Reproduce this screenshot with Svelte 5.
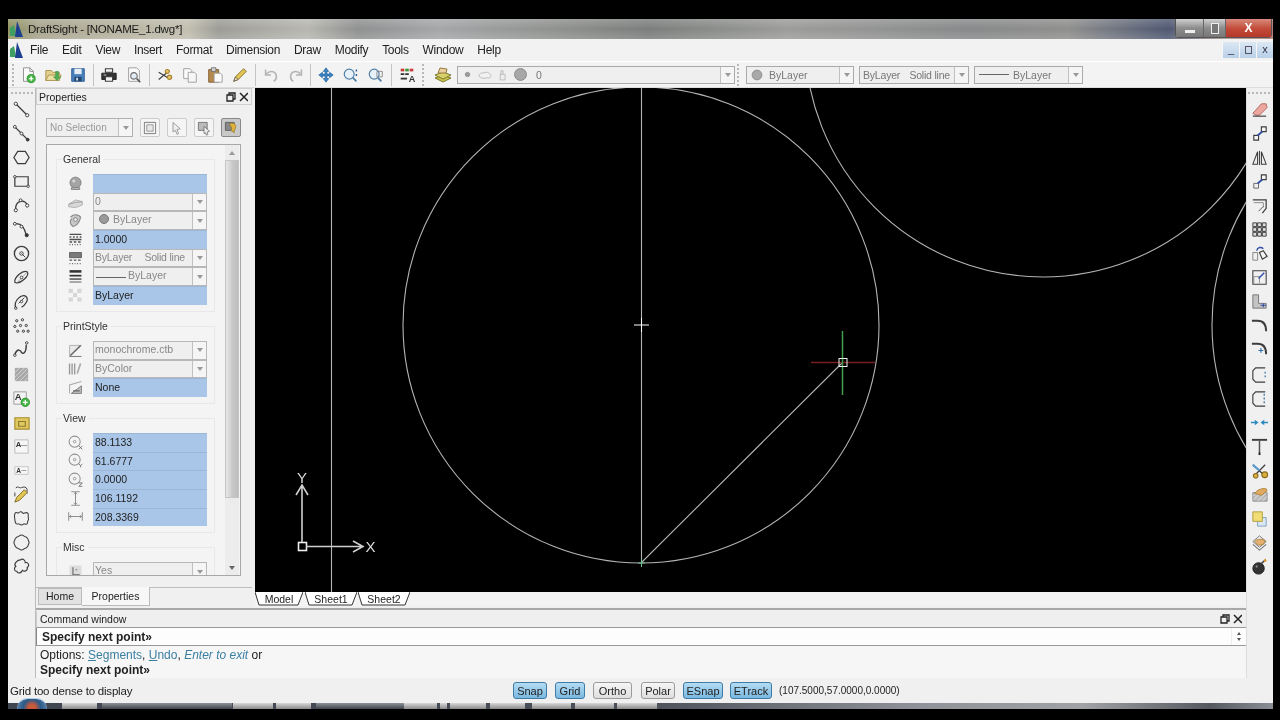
<script>
	const dot = (x, y, r) => `M${x - r} ${y}a${r} ${r} 0 1 0 ${r * 2} 0a${r} ${r} 0 1 0 ${-r * 2} 0`;
	const ink = "#3c3c3c";
	const grey = "#8e8e8e";
	const pale = "#b4b4b4";

	// [path, stroke, fill, width]
	const ic = {
		newdoc: [["M5 2h7l4 4v11H5z", "#8a8a8a", "#fbfbfb"], ["M12 2v4h4", "#8a8a8a", "none"], [dot(13.5, 14, 4.5), "#2f8f2f", "#46b846"], ["M11 14h5M13.5 11.500v5", "#fff", "none", 1.5]],
		open: [["M2 5h6l2 2h7v9H2z", "#a89250", "#e3d08c"], ["M2 16l3-6h14l-2 6z", "#a89250", "#efe0a8"], ["M13 6v6h-2.5l4 4 4-4H16V6z", "#2e8a3a", "#4fae55", 0.6]],
		save: [["M3 3h14v14H3z", "#2c5c94", "#4a80bd"], ["M6 3h8v6H6z", "none", "#e8eef5"], ["M6 12h8v5H6z", "none", "#24486f"], ["M8 13h2v3H8z", "none", "#cfdcea"]],
		print: [["M6 3h8v4H6z", ink, "#f2f2f2", 1.2], ["M2 8h16v7H2z", "#222", "#333"], ["M6 12h8v5H6z", ink, "#f4f4f4", 1.2], ["M4 10h3", "#ddd", "none"]],
		preview: [["M4 2h9l3 3v12H4z", "#9a9a9a", "#fafafa"], [dot(10, 11, 3.6), "#6a6a6a", "#e2ecf6", 1.2], ["M13 14l4 4", "#555", "none", 1.8]],
		cut: [["M3 15L15 5", ink, "none", 1.2], ["M3 7l10 6", ink, "none", 1.2], [dot(15, 12.5, 2.4), "#a8822c", "#e4c468", 1.2], [dot(12.5, 6, 2.2), "#a8822c", "#e4c468", 1.2]],
		copy: [["M3 3h7l2 2v9H3z", "#9c9c9c", "#fafafa"], ["M8 7h7l2 2v9H8z", "#9c9c9c", "#f6f6f6"]],
		paste: [["M3 4h11v14H3z", "#7d5c2e", "#b58a4c"], ["M6 2h5v4H6z", "#6e6e6e", "#d6d6d6"], ["M9 8h7l2 2v8H9z", "#9c9c9c", "#fbfbfb"]],
		pencil: [["M3 17l2-5L14 3l3 3-9 9z", "#7e6a28", "#e2c553"], ["M3 17l2-5 3 3z", "#333", "#eadcb4", 0.6]],
		undo: [["M5 9c4-5 11-3 11 3 0 2-1 4-3 5", pale, "none", 1.8], ["M4 4v6h6", pale, "none", 1.8]],
		redo: [["M15 9c-4-5-11-3-11 3 0 2 1 4 3 5", pale, "none", 1.8], ["M16 4v6h-6", pale, "none", 1.8]],
		pan: [["M10 2l3 4h-2v3h3V7l4 3-4 3v-2h-3v3h2l-3 4-3-4h2v-3H6v2l-4-3 4-3v2h3V6H7z", "#1f5c96", "#3d86c6", 0.7]],
		zoomd: [[dot(8, 9, 5.5), "#4f7fa8", "#e8f1f8", 1.3], ["M12 13l4 4", "#4f7fa8", "none", 2], ["M16 4v2M16 9v2", "#2c5c94", "none", 1.6]],
		zoomw: [[dot(8, 9, 5.5), "#4f7fa8", "#e8f1f8", 1.3], ["M12 13l4 4", "#4f7fa8", "none", 2], ["M11 6h6v6h-6z", "#888", "none", 1]],
		layerman: [["M3 3h4v3H3z", "none", "#c93a3a"], ["M8 3h4v3H8z", "none", "#3a9a3a"], ["M13 3h4v3h-4z", "none", "#c93a3a"], ["M3 8h4v2H3zM8 8h4v2H8z", "none", "#333"], ["M3 13h7v2H3z", "none", "#333"]],
		layer: [["M2 13l8-3 8 3-8 4z", "#7d7a2e", "#c8c24c"], ["M2 10l8-3 8 3-8 4z", "#7d7a2e", "#d9d26a"], ["M5 8l2-5 7 1-1 4z", "#9a7a40", "#e8d0a0"]],
		bulb: [[dot(10, 10, 3.5), "#8c8c8c", "#9a9a9a"]],
		cloud: [["M4 12c-2-3 2-5 4-4 2-2 8-1 8 2 2 2-1 4-3 3-2 1-7 1-9-1z", "#b8b8b8", "#f0f0f0"]],
		lock: [["M6 9h7v8H6z", "#aaa", "#ececec"], ["M7 9V4h3v5", "#aaa", "none"]],
		sphere: [[dot(10, 10, 7), "#808080", "#a8a8a8"]],

		line: [["M4 4l12 12", ink, "none", 1.3], [dot(4, 4, 1.7), ink, "#fff"], [dot(16, 16, 1.7), ink, "#fff"]],
		poly: [["M3 3l7 7 7 7", ink, "none", 1.3], [dot(3, 3, 1.5), ink, "#fff"], [dot(10, 10, 1.5), ink, "#fff"], [dot(16.5, 16.5, 1.5), ink, "#333"]],
		hex: [["M6 3.500h8l4 6.500-4 6.500H6L2 10z", ink, "none", 1.3]],
		rect: [["M3 5h14v10H3z", ink, "none", 1.3], [dot(3, 5, 1.3), ink, "#fff"], [dot(17, 15, 1.3), ink, "#fff"]],
		arc: [["M4 14C3 6 12 2 16 9", ink, "none", 1.3], [dot(4, 15, 1.7), ink, "#fff"], [dot(9, 4.5, 1.5), ink, "#fff"], [dot(16, 10, 1.7), ink, "#fff"]],
		curve: [["M3 4c6-1 10 3 12 12", ink, "none", 1.3], [dot(3, 4, 1.5), ink, "#fff"], [dot(10, 7, 1.5), ink, "#fff"], [dot(15.5, 16, 1.7), ink, "#333"]],
		circle: [[dot(10, 10, 7.5), ink, "none", 1.4], [dot(10, 10, 1.8), ink, "#fff"], ["M10 10l4 4", ink, "none", 1]],
		ellipse: [["M3 15c-1-5 8-13 13-11 3 4-8 14-13 11z", ink, "none", 1.3], ["M4 17L17 3", grey, "none", 0.8], [dot(10, 10, 1.4), ink, "#fff"]],
		earc: [["M4 17C1 9 11 1 15 5c3 3-1 9-5 11", ink, "none", 1.3], ["M7 12l6-6", ink, "none", 1], [dot(10, 10, 1.3), ink, "#fff"], [dot(4, 17, 1.3), ink, "#fff"]],
		points: [[dot(5, 5, 1.2), ink, "#ddd"], [dot(11, 4, 1.2), ink, "#ddd"], [dot(3, 11, 1.2), ink, "#ddd"], [dot(9, 10, 1.2), ink, "#ddd"], [dot(15, 10, 1.2), ink, "#ddd"], [dot(6, 16, 1.2), ink, "#ddd"], [dot(12, 16, 1.2), ink, "#ddd"], [dot(17, 16, 1.2), ink, "#ddd"]],
		spline: [["M3 15c3-7 6-4 7-2s5 2 5-8", ink, "none", 1.5], [dot(3, 16, 1.3), ink, "#fff"], [dot(15.5, 3, 1.3), ink, "#fff"]],
		hatch: [["M3 3h14v14H3z", "none", "#a8a8a8"], ["M3 8l5-5M3 13L13 3M3 17L17 3M8 17l9-9M13 17l4-4", "#e0e0e0", "none", 0.8]],
		textadd: [["M2 3h13v13H2z", "#9a9a9a", "#f4f4f4"], [dot(14, 14, 4.4), "#2f8f2f", "#46b846"], ["M11.500 14h5M14 11.500v5", "#fff", "none", 1.4]],
		block: [["M3 5h15v12H3z", "#a58c2c", "#e0c860", 1.2], ["M7 9h7v5H7z", "#8d7a30", "none", 1.2]],
		note: [["M3 3h14v14H3z", "#bbb", "#f7f7f7"], ["M9 9h7", "#999", "none"]],
		stext: [["M3 6h14v8H3z", "#c4c4c4", "#f7f7f7"], ["M10 10h5", "#999", "none"]],
		revise: [["M4 3c2-2 4 0 5 0s4-2 6 0 0 5 1 6", ink, "none", 1], ["M3 18l2-5 8-8 3 3-8 8z", "#7e6a28", "#e2c553"], ["M3 8v4", ink, "none", 1]],
		cloudrect: [["M3 5c1-3 3 0 4-1s3-2 4 0 3-1 5 0 1 3 1 4 1 3 0 4 0 4-2 4-2-1-3 0-3 1-4 0-3 1-4-1-1-3-1-4-1-3 0-6z", ink, "none", 1.1]],
		cloudcirc: [["M10 2c2 0 3 2 4 2s3 2 3 3 1 2 1 3-1 2-1 3-2 3-3 3-2 2-4 2-3-2-4-2-3-2-3-3-1-2-1-3 1-2 1-3 2-3 3-3 2-2 4-2z", ink, "none", 1.1]],
		cloudfree: [["M9 3c3-2 5 1 5 3 3-1 5 3 2 5 1 3-3 5-5 3-1 3-5 4-6 1-3 0-3-4-1-5-3-3 2-7 5-7z", ink, "none", 1.2]],

		eraser: [["M3 14l9-10h5l1 4-8 8H6z", "#b06a64", "#eca8a0"], ["M3 17h14", ink, "none", 1.2]],
		copyo: [["M4 12h5v5H4zM12 3h5v5h-5z", ink, "#f6f6f6", 1.2], ["M8 12l5-4", "#334fa8", "none", 2]],
		mirror: [["M10 3v15", ink, "none", 1], ["M8 4L3 17h5zM12 4l5 13h-5z", ink, "none", 1.1]],
		move: [["M4 12h5v5H4z", "#666", "none", 1], ["M12 3h5v5h-5z", ink, "#f6f6f6", 1.2], ["M8 12l5-4", "#334fa8", "none", 2]],
		offset: [["M3 4h14v9l-4 5", ink, "none", 1.3], ["M4 7h10v5", "#888", "none", 1], ["M9 16l5-5", "#555", "none", 1]],
		array: [["M3 3h4v4H3zM8 3h4v4H8zM13 3h4v4h-4zM3 8h4v4H3zM8 8h4v4H8zM13 8h4v4h-4zM3 13h4v4H3zM8 13h4v4H8zM13 13h4v4h-4z", ink, "#ddd", 1]],
		rotate: [["M3 9h5v8H3z", "#777", "none", 0.9], ["M10 9l4-2 4 6-5 3z", ink, "#f4f4f4", 1.2], ["M7 7c1-4 5-4 7-2", "#334fa8", "none", 1.5]],
		scale: [["M3 3h14v14H3z", ink, "none", 1.1], ["M4 16V9h6v7", "#888", "none", 0.9], ["M9 11l6-6", "#334fa8", "none", 1.6]],
		stretch: [["M3 3h6v9h8v5H3z", "#777", "#c4c4c4"], ["M11 14h6M14 12v4", "#334fa8", "none", 1.2]],
		fillet: [["M2 5h6c6 0 9 4 9 11", ink, "none", 2]],
		filletadd: [["M2 4h6c6 0 9 4 9 11", ink, "none", 2], ["M9 11h5M11.500 8.500v5", "#2f6fa8", "none", 1.2]],
		chamfer: [["M16 3H6L3 6v9l3 3h10", ink, "none", 1.2], ["M16 7v2M16 11v2", "#5c88aa", "none", 1.6]],
		chamfer2: [["M16 3H6L3 6v9l3 3h10", ink, "none", 1.2], ["M15 5v2M15 9v2M15 13v2", "#5c88aa", "none", 1.6]],
		join: [["M1 10h6M13 10h6", "#2f8abf", "none", 1.6], ["M5 7l4 3-4 3zM15 7l-4 3 4 3z", "none", "#2f8abf"]],
		trim: [["M2 3h16", ink, "none", 2], ["M10 4v12", "#555", "none", 1.6], ["M10 16v3", "#222", "none", 2]],
		scissors: [["M3 4l12 11M16 4L5 15", ink, "none", 1.3], ["M3 4l7 6", "#5c9ccf", "none", 2.4], [dot(15.5, 14.5, 3), "#8c6a1c", "#dcb040", 1.2], [dot(6, 15.5, 2.4), "#8c6a1c", "#dcb040", 1.2]],
		hatchedit: [["M3 8h15v9H3z", "#8d8d8d", "#bdbdbd"], ["M3 12l4-4M3 16l8-8M8 17l9-9M13 17l5-5", "#eee", "none", 0.7], ["M5 9c2-4 8-6 12-5l1 2-6 5-3-1z", "#a07a2c", "#e0a860", 0.8]],
		layers2: [["M8 9h9v9H8z", "#7aa0c0", "#dbe8f3"], ["M3 3h10v10H3z", "#b0a040", "#f1dc76"]],
		handstack: [["M3 9l7-6 7 6-7 6z", "#777", "#eee"], ["M3 12l7 6 7-6", "#777", "none", 1.2], ["M5 9c2-3 8-3 11-1l-2 4-5 1z", "#a07a2c", "#e6b070", 0.8]],
		bomb: [[dot(9, 12, 6), "#222", "#333"], ["M12 7l3-3", "#444", "none", 1.6], ["M16 2l1 2-2 1z", "#d08820", "#e6a020"], [dot(7, 10, 1.2), "none", "#888"]],

		material: [[dot(10, 9, 6.5), "#777", "#a4a4a4"], ["M5 15h10v2H5z", "#777", "#c8c8c8"], [dot(8, 7, 1.8), "none", "#d8d8d8"]],
		layerrow: [["M2 12l8-5 8 2v4l-8 3-8-1z", "#aaa", "#d8d8d8"], ["M2 12l8-2 8-1", "#999", "none"]],
		colorrow: [["M4 6c4-4 10-3 12 0-1 6-5 11-9 11C3 15 3 9 6 8", "#888", "#c8c8c8", 1.2], [dot(10, 9, 2.2), "#777", "#eee"]],
		scale2: [["M3 4h14M3 7h2m2 0h2m2 0h2m2 0h2M3 10h14M3 13h3m2 0h3m2 0h3M3 16h1m2 0h1m2 0h1m2 0h1m2 0h1", "#4e4e4e", "none", 1.6]],
		ltype: [["M3 3h14v6H3z", "#555", "#7a7a7a"], ["M3 12h3m2 0h3m2 0h3M3 16h1m2 0h1m2 0h1m2 0h1m2 0h1", "#555", "none", 1.5]],
		lweight: [["M3 4h14", "#333", "none", 3], ["M3 9h14", "#333", "none", 2], ["M3 13h14", "#333", "none", 1.5], ["M3 16.500h14", "#444", "none", 1]],
		checker: [["M2 2h5v5H2zM12 2h5v5h-5zM7 7h5v5H7zM2 12h5v5H2zM12 12h5v5h-5z", "none", "#d6d6d6"], ["M7 2h5v5H7zM2 7h5v5H2zM12 7h5v5h-5zM7 12h5v5H7z", "none", "#f6f6f6"]],
		pen: [["M3 4h14L3 17z", "#aaa", "#e8e8e8"], ["M4 16L16 4", "#666", "none", 1.6], ["M3 17h14", "#666", "none", 1]],
		pencils: [["M3 4v13M6 4v13M9 4v13", "#999", "none", 1.6], ["M12 16l4-12", "#aaa", "none", 2]],
		wedge: [["M3 17V7l14-4", "#aaa", "none", 1.2], ["M5 17L17 8v9z", "#777", "#bbb"], ["M7 14h8", "#444", "none"]],
		vx: [[dot(9, 9, 6.5), grey, "none", 1.2], [dot(9, 9, 1.5), grey, "none"], ["M14 14l4 4M18 14l-4 4", "#666", "none", 1]],
		vy: [[dot(9, 9, 6.5), grey, "none", 1.2], [dot(9, 9, 1.5), grey, "none"], ["M14 14l2 2 2-2M16 16v2", "#666", "none", 1]],
		vz: [[dot(9, 9, 6.5), grey, "none", 1.2], [dot(9, 9, 1.5), grey, "none"], ["M14 14h4l-4 4h4", "#666", "none", 1]],
		vh: [["M5 2h10M5 18h10M10 2v16", grey, "none", 1.2], ["M8 5l2-2 2 2M8 15l2 2 2-2", grey, "none", 1]],
		vw: [["M2 5v10M18 5v10M2 10h16", grey, "none", 1.2], ["M5 8l-2 2 2 2M15 8l2 2-2 2", grey, "none", 1]],
		ucs: [["M3 3h14v14H3z", "none", "#dcdcdc"], ["M7 5v9h8", "#666", "none", 1.3], ["M10 8h2", "#666", "none", 1]],

		selquick: [["M3 3h14v14H3z", "#666", "none", 1], ["M6 6h8v8H6z", "#888", "#e8e8e8", 1]],
		selplus: [["M5 3l9 8-4 1 2 5-2 1-2-5-3 2z", "#8a8a8a", "#eee", 1]],
		selwin: [["M3 3h11v10H3z", "#666", "#bbb", 1], ["M10 8l7 6-3 1 1 3-2 1-1-3-2 1z", "#555", "#eee", 0.8]],
		selact: [["M3 3h11v10H3z", "#555", "#888", 1], ["M8 5c3-2 8-1 8 3s-3 4-2 8l-4-3 1-3z", "#8a6f1c", "#e0b23c", 0.8]]
	};

	// the few icons that carry a real letter: [x, y, size]
	const letters = {
		layerman: [12, 18, 10],
		textadd: [3, 12, 10],
		note: [4, 11, 8],
		stext: [4.500, 12.500, 7]
	};

	const menus = ["File", "Edit", "View", "Insert", "Format", "Dimension", "Draw", "Modify", "Tools", "Window", "Help"];
	const tools = [
		["newdoc", "open", "save"],
		["print", "preview"],
		["cut", "copy", "paste", "pencil"],
		["undo", "redo"],
		["pan", "zoomd", "zoomw"],
		["layerman"]
	];
	const leftTools = ["line", "poly", "hex", "rect", "arc", "curve", "circle", "ellipse", "earc", "points", "spline", "hatch", "textadd", "block", "note", "stext", "revise", "cloudrect", "cloudcirc", "cloudfree"];
	const rightTools = ["eraser", "copyo", "mirror", "move", "offset", "array", "rotate", "scale", "stretch", "fillet", "filletadd", "chamfer", "chamfer2", "join", "trim", "scissors", "hatchedit", "layers2", "handstack", "bomb"];

	const groups = [
		{ name: "General", rows: [
			{ icon: "material", kind: "val", text: "" },
			{ icon: "layerrow", kind: "sel", text: "0" },
			{ icon: "colorrow", kind: "sel", text: "ByLayer", swatch: true },
			{ icon: "scale2", kind: "val", text: "1.0000" },
			{ icon: "ltype", kind: "sel", text: "ByLayer", extra: "Solid line" },
			{ icon: "lweight", kind: "sel", text: "ByLayer", rule: true },
			{ icon: "checker", kind: "val", text: "ByLayer" }
		] },
		{ name: "PrintStyle", rows: [
			{ icon: "pen", kind: "sel", text: "monochrome.ctb" },
			{ icon: "pencils", kind: "sel", text: "ByColor" },
			{ icon: "wedge", kind: "val", text: "None" }
		] },
		{ name: "View", rows: [
			{ icon: "vx", kind: "val", text: "88.1133" },
			{ icon: "vy", kind: "val", text: "61.6777" },
			{ icon: "vz", kind: "val", text: "0.0000" },
			{ icon: "vh", kind: "val", text: "106.1192" },
			{ icon: "vw", kind: "val", text: "208.3369" }
		] },
		{ name: "Misc", rows: [{ icon: "ucs", kind: "sel", text: "Yes" }] }
	];

	const statusBtns = [
		{ label: "Snap", on: true, w: 34 },
		{ label: "Grid", on: true, w: 30, gap: 8 },
		{ label: "Ortho", on: false, w: 39, gap: 8 },
		{ label: "Polar", on: false, w: 34, gap: 9 },
		{ label: "ESnap", on: true, w: 40, gap: 8 },
		{ label: "ETrack", on: true, w: 42, gap: 7 }
	];
	const sheets = [
		{ label: "Model", w: 48, gap: 0 },
		{ label: "Sheet1", w: 52, gap: 2 },
		{ label: "Sheet2", w: 52, gap: 1 }
	];
	const taskItems = [
		{ w: 35, gap: 54, tone: "light" },
		{ w: 130, gap: 5, tone: "dark" },
		{ w: 40, gap: 1, tone: "light" },
		{ w: 35, gap: 3, tone: "light" },
		{ w: 88, gap: 5, tone: "dark" },
		{ w: 33, gap: 0, tone: "light" },
		{ w: 7, gap: 3, tone: "light" },
		{ w: 36, gap: 3, tone: "light" },
		{ w: 35, gap: 4, tone: "light" },
		{ w: 39, gap: 7, tone: "light" },
		{ w: 39, gap: 4, tone: "light" },
		{ w: 40, gap: 3, tone: "light" }
	];
</script>

{#snippet icon(name, size = 20)}
	<svg class="icon" width={size} height={size} viewBox="0 0 20 20">
		{#each ic[name] as [d, stroke, fill, width]}
			<path {d} {stroke} {fill} stroke-width={width ?? 1} />
		{/each}
		{#if letters[name]}
			<text class="ic-letter" x={letters[name][0]} y={letters[name][1]} font-size={letters[name][2]}>A</text>
		{/if}
	</svg>
{/snippet}

{#snippet arrow()}
	<span class="arrow"><i></i></span>
{/snippet}

{#snippet winIcons()}
	<svg class="dock" width="24" height="12" viewBox="0 0 24 12">
		<path d="M3 4h6v6H3zM5 4V2h6v6H9" fill="none" stroke="#222" stroke-width="1.3" />
		<path d="M16 2l8 8M24 2l-8 8" fill="none" stroke="#222" stroke-width="1.5" />
	</svg>
{/snippet}

<div class="screen">
	<div class="window">
		<header class="title">
			<svg class="logo" width="15" height="18" viewBox="0 0 15 18">
				<path d="M1 16V8l4-3 2 11z" fill="#3f9f63" />
				<path d="M8 1l6 16H6z" fill="#1d3f8f" />
			</svg>
			<span class="title-text">DraftSight - [NONAME_1.dwg*]</span>
			<div class="win-btns">
				<span class="wb min"><i></i></span>
				<span class="wb res"><i></i></span>
				<span class="wb close">X</span>
			</div>
		</header>

		<nav class="menu">
			<svg class="logo" width="15" height="18" viewBox="0 0 15 18">
				<path d="M1 16V8l4-3 2 11z" fill="#3f9f63" />
				<path d="M8 1l6 16H6z" fill="#1d3f8f" />
			</svg>
			<div class="menu-items">
				{#each menus as m}
					<span>{m}</span>
				{/each}
			</div>
			<div class="mdi">
				<span>_</span>
				<span class="mdi-r"></span>
				<span>x</span>
			</div>
		</nav>

		<div class="toolbar">
			<span class="grip"></span>
			<div class="tool-sets">
				{#each tools as set}
					<div class="tool-set">
						{#each set as t}
							<span class="tbtn">{@render icon(t, 18)}</span>
						{/each}
					</div>
				{/each}
			</div>
			<span class="grip g2"></span>
			<span class="layer-ic">{@render icon("layer", 20)}</span>
			<div class="combo layer-combo">
				<span class="combo-in">
					{@render icon("bulb", 13)}
					{@render icon("cloud", 18)}
					{@render icon("lock", 14)}
					{@render icon("sphere", 17)}
					<b>0</b>
				</span>
				{@render arrow()}
			</div>
			<span class="grip g3"></span>
			<div class="combo c-color">
				<span class="combo-in">{@render icon("sphere", 14)}<b>ByLayer</b></span>
				{@render arrow()}
			</div>
			<div class="combo c-style">
				<span class="combo-in spread"><b>ByLayer</b><b>Solid line</b></span>
				{@render arrow()}
			</div>
			<div class="combo c-weight">
				<span class="combo-in"><em class="rule"></em><b>ByLayer</b></span>
				{@render arrow()}
			</div>
		</div>

		<div class="body">
			<aside class="strip left">
				<span class="grip-h"></span>
				{#each leftTools as t}
					<span class="sbtn">{@render icon(t, 19)}</span>
				{/each}
			</aside>

			<div class="center">
				<div class="upper">
					<section class="props">
						<div class="props-head">
							<span>Properties</span>
							{@render winIcons()}
						</div>
						<div class="sel-row">
							<div class="combo sel-combo">
								<span class="combo-in"><b>No Selection</b></span>
								{@render arrow()}
							</div>
							<span class="pbtn">{@render icon("selquick", 16)}</span>
							<span class="pbtn">{@render icon("selplus", 16)}</span>
							<span class="pbtn">{@render icon("selwin", 16)}</span>
							<span class="pbtn active">{@render icon("selact", 16)}</span>
						</div>
						<div class="list">
							<div class="list-in">
								{#each groups as g}
									<div class="group">
										<span class="legend">{g.name}</span>
										{#each g.rows as r}
											<div class="prow">
												<span class="prow-ic">{@render icon(r.icon, 17)}</span>
												{#if r.kind === "val"}
													<span class="pval">{r.text}</span>
												{:else}
													<span class="psel">
														<span class="psel-in" class:spread={r.extra}>
															{#if r.swatch}<i class="sw"></i>{/if}
															{#if r.rule}<em class="rule"></em>{/if}
															<span>{r.text}</span>
															{#if r.extra}<span>{r.extra}</span>{/if}
														</span>
														{@render arrow()}
													</span>
												{/if}
											</div>
										{/each}
									</div>
								{/each}
							</div>
							<div class="vscroll">
								<span class="up"></span>
								<span class="thumb"></span>
								<span class="down"></span>
							</div>
						</div>
						<div class="ptabs">
							<span class="ptab">Home</span>
							<span class="ptab cur">Properties</span>
						</div>
					</section>

					<div class="drawing">
						<svg class="canvas" width="991" height="504" viewBox="255 88 991 504">
							<g fill="none" stroke="#b4b4b4" stroke-width="1.1">
								<circle cx="641" cy="325" r="238" />
								<circle cx="1043" cy="39" r="238" />
								<circle cx="1450" cy="325" r="238" />
								<path d="M331.500 88V592M641.500 88V563M641 563L843 362" />
							</g>
							<path d="M634 325h15M641.500 318v14" stroke="#fff" />
							<path d="M641.500 559v8M638 563h7" stroke="#6fbf8f" />
							<path d="M811 362.500h64" stroke="#7a1f1f" stroke-width="1.5" />
							<path d="M842.500 331v64" stroke="#3f9f4f" stroke-width="1.5" />
							<rect x="839" y="358.500" width="8" height="8" fill="none" stroke="#eee" />
							<g fill="none" stroke="#cfcfcf" stroke-width="1.6">
								<rect x="298.500" y="542.500" width="8" height="8" stroke="#eee" />
								<path d="M302 542V486M296 495l6-10 6 10M306 546.500H362M353 541l10 5.500-10 5.500" />
							</g>
							<text class="axis" x="302" y="483" text-anchor="middle">Y</text>
							<text class="axis" x="370.500" y="552" text-anchor="middle">X</text>
						</svg>
						<div class="sheet-tabs">
							{#each sheets as s}
								<span class="stab" style="width:{s.w}px;margin-left:{s.gap}px">
									<svg width={s.w} height="14" viewBox="0 0 {s.w} 14">
										<path d="M0 0l4 13H{s.w - 5}L{s.w} 0" fill="#fff" stroke="#333" />
									</svg>
									<span>{s.label}</span>
								</span>
							{/each}
						</div>
					</div>
				</div>

				<section class="cmd">
					<div class="cmd-head">
						<span>Command window</span>
						{@render winIcons()}
					</div>
					<div class="cmd-in">
						<b>Specify next point»</b>
						<span class="updown"><i></i><i></i></span>
					</div>
					<div class="cmd-log">
						<div>
							Options: <a href="#s"><u>S</u>egments</a>, <a href="#u"><u>U</u>ndo</a>, <a href="#e"><i>Enter to exit</i></a> or
						</div>
						<div><b>Specify next point»</b></div>
					</div>
				</section>
			</div>

			<aside class="strip right">
				<span class="grip-h"></span>
				{#each rightTools as t}
					<span class="sbtn">{@render icon(t, 19)}</span>
				{/each}
			</aside>
		</div>

		<footer class="status">
			<span class="msg">Grid too dense to display</span>
			<div class="st-btns">
				{#each statusBtns as b}
					<span class="st-btn" class:on={b.on} style="width:{b.w}px;margin-left:{b.gap ?? 0}px">{b.label}</span>
				{/each}
				<span class="coords">(107.5000,57.0000,0.0000)</span>
			</div>
		</footer>

		<div class="taskbar">
			<span class="orb"></span>
			{#each taskItems as t}
				<span class="tb {t.tone}" style="width:{t.w}px;margin-left:{t.gap}px"></span>
			{/each}
		</div>
	</div>
</div>

<style>
	:global(body) {
		margin: 0;
		background: #000;
	}

	.screen {
		width: 1280px;
		height: 720px;
		box-sizing: border-box;
		padding: 19px 7px 11px 8px;
		background: #000;
		font-family: "Liberation Sans", Arial, sans-serif;
		font-size: 12px;
		color: #222;
		overflow: hidden;
	}

	.window {
		height: 100%;
		display: flex;
		flex-direction: column;
		background: #f0f0f0;
		filter: blur(0.45px);
	}

	.icon {
		display: block;
		flex: none;
	}

	.ic-letter {
		font-family: "Liberation Sans", sans-serif;
		font-weight: bold;
		fill: #333;
	}

	.title {
		height: 20px;
		flex: none;
		display: flex;
		align-items: center;
		padding-left: 1px;
		background:
			linear-gradient(180deg, rgba(255, 255, 255, 0.18), rgba(255, 255, 255, 0) 50%, rgba(255, 255, 255, 0.15)),
			linear-gradient(90deg, #8f915e 0, #a8a48e 30px, #c2bfb0 180px, #9d9d96 210px, #b7b7b0 300px, #8f9090 350px, #a4a6a8 430px, #8d8f8c 560px, #7b7e7c 640px, #9c9d9a 780px, #87898a 960px, #8f8f8d 1060px, #4f5872 1160px, #a58f88 1220px, #b07a70 1265px);
	}

	.logo {
		flex: none;
	}

	.title-text {
		margin-left: 4px;
		font-size: 11.5px;
		letter-spacing: -0.2px;
		color: #1a1a1a;
	}

	.win-btns {
		margin-left: auto;
		height: 18px;
		align-self: flex-start;
		display: flex;
		border: 1px solid #555;
		border-top: 0;
		border-radius: 0 0 4px 4px;
		margin-right: 1px;
	}

	.wb {
		display: flex;
		align-items: center;
		justify-content: center;
		background: linear-gradient(180deg, #d0d0d0, #8d8d8d 50%, #777);
	}

	.wb.min {
		width: 27px;
	}

	.wb.min i {
		width: 10px;
		height: 3px;
		margin-top: 7px;
		background: #eee;
	}

	.wb.res {
		width: 21px;
		border-left: 1px solid #666;
	}

	.wb.res i {
		width: 6px;
		height: 9px;
		border: 1px solid #eee;
		background: #777;
	}

	.wb.close {
		width: 45px;
		border-left: 1px solid #666;
		background: linear-gradient(180deg, #d98a7c, #c24a38 55%, #b5382a);
		color: #fff;
		font-weight: bold;
		font-size: 12px;
	}

	.menu {
		height: 22px;
		flex: none;
		display: flex;
		align-items: center;
		padding-left: 1px;
		background: #f2f2f2;
	}

	.menu-items {
		display: flex;
		gap: 13.9px;
		margin-left: 6px;
		font-size: 12px;
		letter-spacing: -0.3px;
	}

	.mdi {
		margin-left: auto;
		height: 16px;
		display: flex;
	}

	.mdi span {
		width: 16px;
		border-left: 1px solid #f6f6f6;
		background: linear-gradient(180deg, #dce8f4, #b8d0e8);
		color: #334;
		text-align: center;
		font-size: 11px;
		line-height: 14px;
		position: relative;
	}

	.mdi-r::after {
		content: "";
		position: absolute;
		left: 5px;
		top: 4px;
		width: 5px;
		height: 6px;
		border: 1px solid #556;
	}

	.toolbar {
		height: 27px;
		flex: none;
		display: flex;
		align-items: center;
		background: #f3f3f3;
		border-top: 1px solid #fff;
		box-sizing: border-box;
		border-bottom: 1px solid #ddd;
	}

	.grip {
		width: 1px;
		height: 22px;
		margin-left: 4px;
		border-left: 2px dotted #b8b8b8;
		flex: none;
	}

	.tool-sets {
		display: flex;
	}

	.tool-set {
		display: flex;
		gap: 7px;
		padding: 0 6px;
		border-right: 1px solid #c4c4c4;
		height: 22px;
		align-items: center;
	}

	.tool-set:first-child {
		padding-left: 4px;
	}

	.tool-set:nth-child(4) {
		padding-right: 5px;
	}

	.tool-set:last-child {
		border-right: 0;
	}

	.tbtn {
		width: 18px;
		height: 18px;
		display: block;
	}

	.grip.g2 {
		margin-left: 0;
	}

	.layer-ic {
		margin-left: 8px;
	}

	.combo {
		height: 18px;
		display: flex;
		border: 1px solid #aaa;
		background: #efefef;
		box-sizing: border-box;
		flex: none;
		color: #777;
		font-size: 10.5px;
	}

	.combo b,
	.combo-in {
		font-weight: normal;
	}

	.combo-in {
		flex: 1;
		display: flex;
		align-items: center;
		gap: 2px;
		padding-left: 3px;
		overflow: hidden;
		min-width: 0;
		white-space: nowrap;
	}

	.combo-in.spread {
		justify-content: space-between;
		padding-right: 4px;
		letter-spacing: -0.2px;
	}

	.layer-combo {
		width: 278px;
		margin-left: 4px;
	}

	.layer-combo b {
		margin-left: 5px;
	}

	.grip.g3 {
		margin-left: 2px;
	}

	.c-color {
		width: 108px;
		margin-left: 6px;
	}

	.c-color b {
		margin-left: 3px;
	}

	.c-style {
		width: 110px;
		margin-left: 5px;
	}

	.c-weight {
		width: 109px;
		margin-left: 5px;
	}

	.rule {
		display: inline-block;
		align-self: center;
		width: 30px;
		height: 1px;
		background: #666;
		margin: 0 2px 0 1px;
		flex: none;
	}

	.arrow {
		width: 13px;
		flex: none;
		display: flex;
		align-items: center;
		justify-content: center;
		border-left: 1px solid #c0c0c0;
		background: #f5f5f5;
	}

	.arrow i {
		width: 0;
		height: 0;
		border: 3px solid transparent;
		border-top: 4px solid #999;
		border-bottom: 0;
	}

	.body {
		flex: 1;
		min-height: 0;
		display: flex;
	}

	.strip {
		width: 28px;
		flex: none;
		display: flex;
		flex-direction: column;
		align-items: center;
		background: #f0f0f0;
		border-right: 1px solid #bbb;
		box-sizing: border-box;
	}

	.strip.right {
		width: 27px;
		border-right: 0;
		border-left: 1px solid #ddd;
		padding-right: 2px;
	}

	.grip-h {
		width: 22px;
		height: 1px;
		margin: 4px 0 2px;
		border-top: 2px dotted #b8b8b8;
		flex: none;
	}

	.sbtn {
		height: 24.1px;
		display: flex;
		align-items: center;
		justify-content: center;
		flex: none;
	}

	.center {
		flex: 1;
		min-width: 0;
		display: flex;
		flex-direction: column;
	}

	.upper {
		height: 518px;
		flex: none;
		display: flex;
		gap: 3px;
	}

	.props {
		width: 216px;
		flex: none;
		display: flex;
		flex-direction: column;
	}

	.props-head {
		height: 17px;
		flex: none;
		box-sizing: border-box;
		border: 1px solid #cfcfcf;
		padding: 0 3px 0 2px;
		display: flex;
		align-items: center;
		justify-content: space-between;
		font-size: 10.5px;
		background: #efefef;
	}

	.dock {
		display: block;
	}

	.sel-row {
		display: flex;
		align-items: center;
		margin: 13px 0 7px 10px;
		gap: 7px;
		height: 19px;
		flex: none;
	}

	.sel-combo {
		width: 87px;
		height: 19px;
		border-color: #b0b0b0;
		font-size: 10px;
		color: #999;
	}

	.pbtn {
		width: 20px;
		height: 19px;
		box-sizing: border-box;
		border: 1px solid #ccc;
		border-radius: 2px;
		display: flex;
		align-items: center;
		justify-content: center;
		background: #f5f5f5;
	}

	.pbtn.active {
		background: #c9c9c9;
		border-color: #888;
	}

	.list {
		width: 195px;
		height: 432px;
		margin-left: 10px;
		flex: none;
		display: flex;
		box-sizing: border-box;
		border: 1px solid #a8a8a8;
		background: #f4f4f4;
		overflow: hidden;
	}

	.list-in {
		flex: 1;
		min-width: 0;
		padding: 14px 0 0 9px;
		display: flex;
		flex-direction: column;
		gap: 14px;
	}

	.group {
		width: 159px;
		box-sizing: border-box;
		flex: none;
		position: relative;
		border: 1px solid #e8e8e8;
		padding: 14px 7px 6px 0;
	}

	.legend {
		position: absolute;
		left: 5px;
		top: -7px;
		padding: 0 3px 0 1px;
		background: #f4f4f4;
		font-size: 10.5px;
		line-height: 13px;
		color: #333;
	}

	.prow {
		height: 18.7px;
		display: grid;
		grid-template-columns: 36px 114px;
	}

	.prow-ic {
		display: flex;
		align-items: center;
		justify-content: center;
		padding-left: 1px;
	}

	.pval {
		background: #a9c6e8;
		border-top: 1px solid #9cb7d6;
		box-sizing: border-box;
		line-height: 17px;
		padding-left: 2px;
		font-size: 10.5px;
		color: #222;
	}

	.psel {
		display: flex;
		border: 1px solid #b8b8b8;
		box-sizing: border-box;
		background: #efefef;
		color: #888;
		font-size: 10.5px;
		line-height: 11px;
	}

	.psel-in {
		flex: 1;
		min-width: 0;
		display: flex;
		align-items: flex-start;
		padding: 2px 0 0 1px;
		white-space: nowrap;
		overflow: hidden;
	}

	.psel-in.spread {
		justify-content: space-between;
		padding-right: 7px;
		letter-spacing: -0.2px;
	}

	.sw {
		width: 10px;
		height: 10px;
		border-radius: 50%;
		background: #9a9a9a;
		border: 1px solid #777;
		box-sizing: border-box;
		margin: 0 4px;
	}

	.vscroll {
		width: 14px;
		flex: none;
		margin-right: 1px;
		display: flex;
		flex-direction: column;
		align-items: stretch;
		background: #ececec;
	}

	.up,
	.down {
		height: 15px;
		flex: none;
		display: flex;
		align-items: center;
		justify-content: center;
	}

	.up::after {
		content: "";
		border: 3px solid transparent;
		border-bottom: 4px solid #999;
		border-top: 0;
	}

	.down {
		margin-top: auto;
	}

	.down::after {
		content: "";
		border: 3px solid transparent;
		border-top: 4px solid #666;
		border-bottom: 0;
	}

	.thumb {
		height: 338px;
		flex: none;
		background: linear-gradient(90deg, #e8e8e8, #c8c8c8 55%, #bdbdbd);
		border: 1px solid #c4c4c4;
		box-sizing: border-box;
	}

	.ptabs {
		margin-top: 11px;
		height: 19px;
		flex: none;
		display: flex;
		align-items: flex-start;
		padding-left: 2px;
		border-top: 1px solid #bdbdbd;
		box-sizing: border-box;
	}

	.ptab {
		height: 17px;
		box-sizing: border-box;
		border: 1px solid #bbb;
		background: #e2e2e2;
		width: 44px;
		text-align: center;
		line-height: 15px;
		font-size: 10.5px;
	}

	.ptab.cur {
		width: 68px;
		height: 19px;
		margin-top: -1px;
		border-top: 0;
		border-left: 0;
		background: #f7f7f7;
		line-height: 19px;
	}

	.drawing {
		flex: 1;
		min-width: 0;
		display: flex;
		flex-direction: column;
	}

	.canvas {
		display: block;
		background: #000;
		flex: none;
	}

	.axis {
		font-family: "Liberation Sans", sans-serif;
		font-size: 15px;
		fill: #dcdcdc;
	}

	.sheet-tabs {
		height: 14px;
		flex: none;
		display: flex;
		background: #f3f3f3;
	}

	.stab {
		height: 14px;
		position: relative;
		display: flex;
		align-items: center;
		justify-content: center;
		font-size: 10.5px;
		color: #222;
	}

	.stab svg {
		position: absolute;
		left: 0;
		top: 0;
	}

	.stab span {
		position: relative;
	}

	.cmd {
		flex: 1;
		min-height: 0;
		display: flex;
		flex-direction: column;
		margin-top: 2px;
		border-top: 2px solid #a8a8a8;
		padding-top: 1px;
	}

	.cmd-head {
		height: 17px;
		flex: none;
		box-sizing: border-box;
		display: flex;
		align-items: center;
		justify-content: space-between;
		padding: 0 4px 0 3px;
		font-size: 10.5px;
		background: #efefef;
		border-left: 1px solid #ccc;
		border-bottom: 1px solid #999;
	}

	.cmd-in {
		height: 18px;
		flex: none;
		box-sizing: border-box;
		display: flex;
		align-items: center;
		justify-content: space-between;
		padding-left: 5px;
		background: #fdfdfd;
		border-left: 1px solid #888;
		border-bottom: 1px solid #999;
		font-size: 12px;
	}

	.updown {
		width: 14px;
		height: 100%;
		display: flex;
		flex-direction: column;
		align-items: center;
		justify-content: center;
		gap: 3px;
		border-left: 1px solid #eee;
	}

	.updown i {
		width: 0;
		height: 0;
		border: 2.5px solid transparent;
		border-bottom: 3px solid #555;
		border-top: 0;
	}

	.updown i:last-child {
		border-top: 3px solid #555;
		border-bottom: 0;
	}

	.cmd-log {
		flex: 1;
		min-height: 0;
		padding: 2px 0 0 4px;
		background: #f6f6f6;
		font-size: 12px;
		line-height: 15px;
		overflow: hidden;
	}

	.cmd-log a {
		color: #3a7fa0;
		text-decoration: none;
	}

	.status {
		height: 25px;
		flex: none;
		display: flex;
		align-items: center;
		background: #f0f0f0;
	}

	.msg {
		margin-left: 2px;
		font-size: 11.5px;
		letter-spacing: -0.2px;
		color: #222;
		width: 125px;
		flex: none;
		white-space: nowrap;
	}

	.st-btns {
		display: flex;
		align-items: center;
		margin-left: 378px;
	}

	.st-btn {
		height: 17px;
		box-sizing: border-box;
		border: 1px solid #9a9a9a;
		border-radius: 3px;
		text-align: center;
		line-height: 16px;
		font-size: 11px;
		background: linear-gradient(180deg, #f6f6f6, #dedede);
		flex: none;
	}

	.st-btn.on {
		border-color: #3e7ca6;
		background: linear-gradient(180deg, #b4dcf4, #7ab8e0);
	}

	.coords {
		margin-left: 7px;
		font-size: 10px;
		white-space: nowrap;
	}

	.taskbar {
		height: 6px;
		flex: none;
		display: flex;
		background: linear-gradient(90deg, #3f4652, #4a4f58 50%, #8f9298 72%, #a0a2a6 85%, #55585f 95%, #8a8f96);
		position: relative;
	}

	.orb {
		position: absolute;
		left: 9px;
		top: -5px;
		width: 30px;
		height: 11px;
		border-radius: 15px 15px 0 0;
		background: radial-gradient(circle at 50% 90%, #c85a3a 0 20%, #2a5a8a 50%, #6a8cb0 100%);
		border-top: 1px solid #b8cfe6;
		box-sizing: border-box;
	}

	.tb {
		height: 6px;
		flex: none;
	}

	.tb.light {
		background: linear-gradient(180deg, #d8d8d8, #8a8a8a);
	}

	.tb.dark {
		background: linear-gradient(180deg, #8e939a, #3e424a);
	}
</style>
